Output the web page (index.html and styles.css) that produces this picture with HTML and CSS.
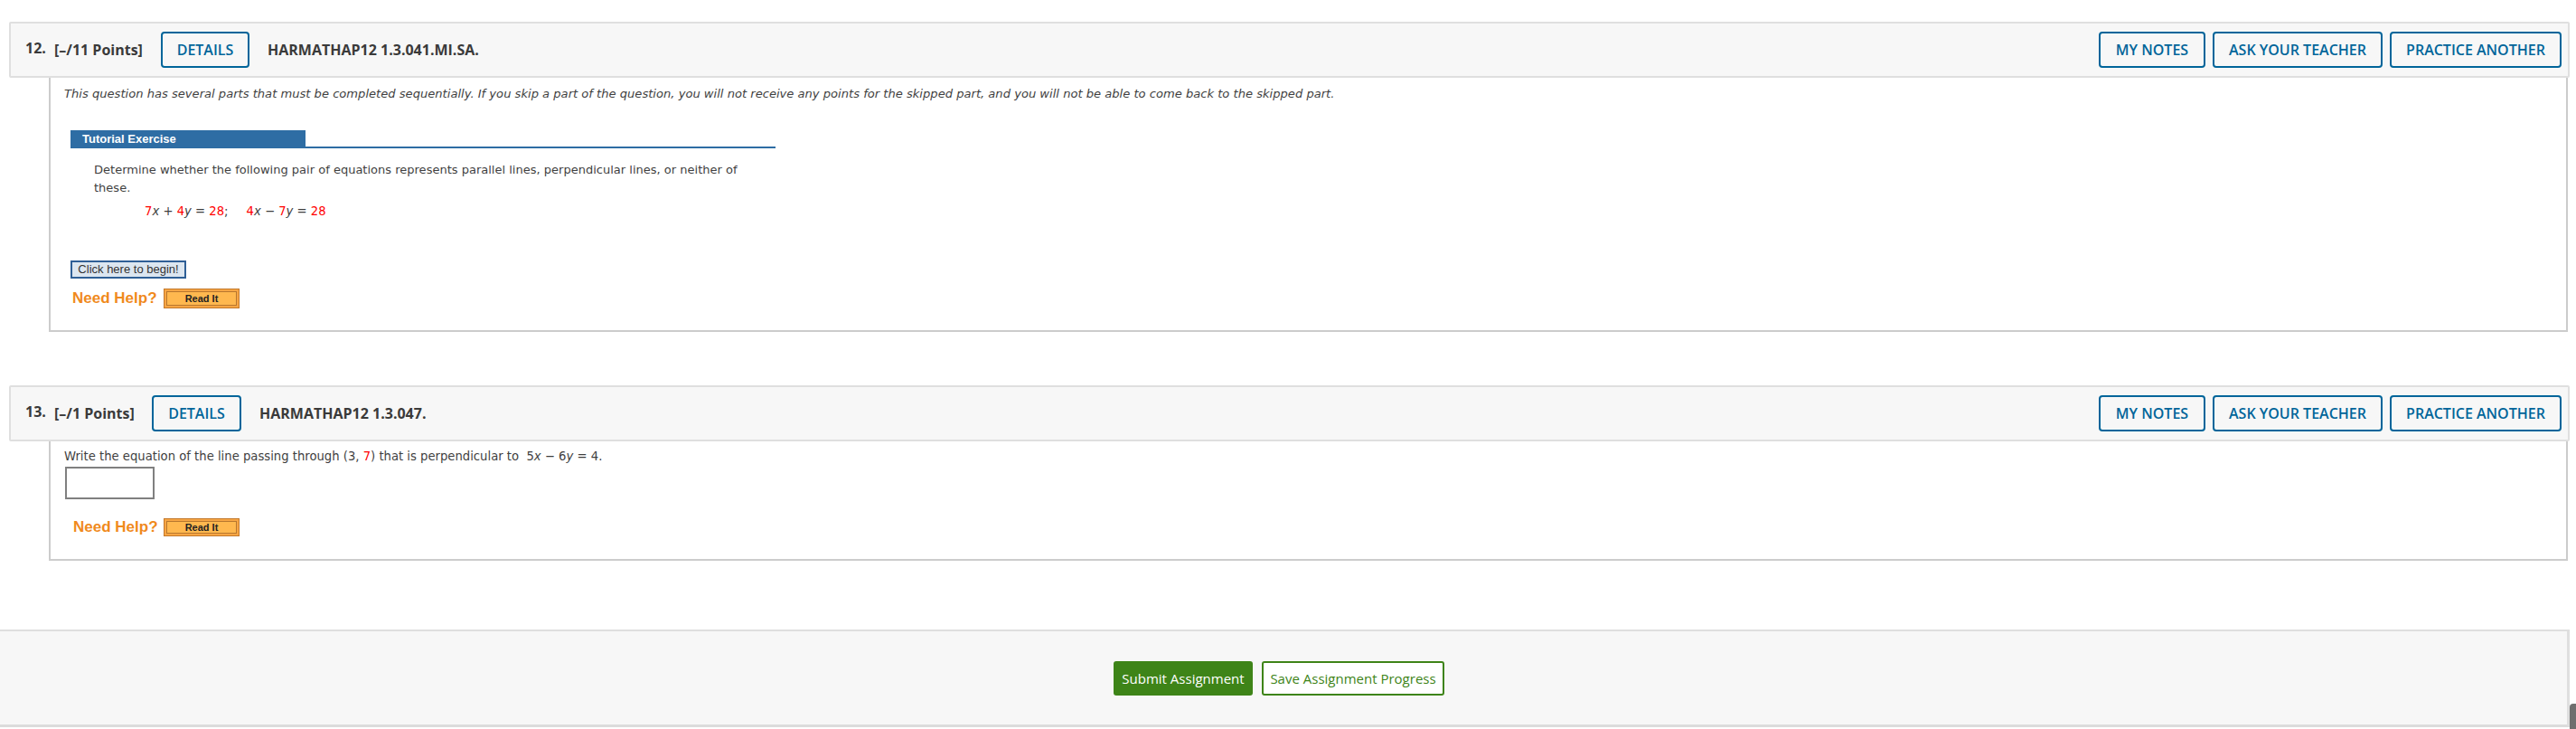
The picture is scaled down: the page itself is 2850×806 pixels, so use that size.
FILE: index.html
```html
<!DOCTYPE html>
<html lang="en">
<head>
<meta charset="utf-8">
<title>Assignment</title>
<link rel="stylesheet" href="styles.css">
</head>
<body>
<main class="page">
  <section class="question q12">
    <header class="qhead">
      <span class="qnum">12.</span>
      <span class="points">[–/11 Points]</span>
      <a class="btn details">DETAILS</a>
      <span class="code">HARMATHAP12 1.3.041.MI.SA.</span>
      <div class="actions">
        <a class="btn notes">MY NOTES</a>
        <a class="btn ask">ASK YOUR TEACHER</a>
        <a class="btn practice">PRACTICE ANOTHER</a>
      </div>
    </header>
    <div class="qbody">
      <p class="note">This question has several parts that must be completed sequentially. If you skip a part of the question, you will not receive any points for the skipped part, and you will not be able to come back to the skipped part.</p>
      <div class="tutorial">
        <div class="tut-head"><span class="tut-title">Tutorial Exercise</span></div>
        <p class="prompt">Determine whether the following pair of equations represents parallel lines, perpendicular lines, or neither of these.</p>
        <p class="equation"><span class="red">7</span><i>x</i> + <span class="red">4</span><i>y</i> = <span class="red">28</span>;<span class="eqgap"></span><span class="red">4</span><i>x</i> − <span class="red">7</span><i>y</i> = <span class="red">28</span></p>
      </div>
      <button class="begin" type="button">Click here to begin!</button>
      <div class="help help-a"><span class="need">Need Help?</span><span class="readit"><span class="readit-in">Read It</span></span></div>
    </div>
  </section>

  <section class="question q13">
    <header class="qhead">
      <span class="qnum">13.</span>
      <span class="points">[–/1 Points]</span>
      <a class="btn details">DETAILS</a>
      <span class="code">HARMATHAP12 1.3.047.</span>
      <div class="actions">
        <a class="btn notes">MY NOTES</a>
        <a class="btn ask">ASK YOUR TEACHER</a>
        <a class="btn practice">PRACTICE ANOTHER</a>
      </div>
    </header>
    <div class="qbody qbody-b">
      <p class="line">Write the equation of the line passing through (3, <span class="red">7</span>) that is perpendicular to&nbsp; 5<i>x</i> − 6<i>y</i> = 4.</p>
      <input class="answer" type="text" aria-label="Answer">
      <div class="help help-b"><span class="need">Need Help?</span><span class="readit"><span class="readit-in">Read It</span></span></div>
    </div>
  </section>

  <footer class="submitbar">
    <button class="submit" type="button">Submit Assignment</button>
    <button class="save" type="button">Save Assignment Progress</button>
  </footer>
  <div class="edgetab"></div>
</main>
</body>
</html>
```

FILE: styles.css
```css
* { box-sizing: border-box; }
html, body { margin: 0; padding: 0; background: #fff; }
body { height: 806px; overflow: hidden; }
.page { position: relative; height: 806px; padding-top: 24px; font-family: "DejaVu Sans", sans-serif; color: #333; }
p { margin: 0; }

.question { margin-left: 10px; margin-right: 7px; }
.q13 { margin-top: 59px; }
.qhead { display: flex; align-items: center; height: 62px; padding: 0 7px 0 16px; background: #f7f7f7; border: 2px solid #dfdfdf; border-radius: 2px; font-family: "Open Sans", sans-serif; }
.qnum { width: 32px; font-size: 16px; font-weight: 700; margin-top: -5px; color: #3a3a3a; }
.points { font-size: 16px; font-weight: 700; color: #3a3a3a; }
.code { font-size: 16px; font-weight: 700; color: #3a3a3a; }
.q12 .points { width: 118px; }
.q13 .points { width: 108px; }
.q12 .code { margin-left: 20px; }
.q13 .code { margin-left: 20px; }
.btn { display: flex; align-items: center; justify-content: center; height: 40px; border: 2.5px solid #00659a; border-radius: 4px; color: #00659a; font-size: 16px; font-weight: 600; }
.q12 .details { width: 98px; }
.q13 .details { width: 99px; }
.actions { display: flex; gap: 8px; margin-left: auto; }
.notes { width: 118px; }
.ask { width: 188px; }
.practice { width: 190px; }

.qbody { margin-left: 44px; margin-right: 2px; padding: 8px 0 24px 15px; border-left: 2.5px solid #ccc; border-right: 2px solid #ccc; border-bottom: 2.5px solid #ccc; font-size: 13px; line-height: 20px; color: #3f3f3f; }
.qbody-b { padding-top: 7px; padding-bottom: 24px; }
.note { font-style: italic; font-size: 13.1px; }
.tutorial { width: 780px; margin: 30px 0 0 7px; }
.tut-head { height: 20px; border-bottom: 2.5px solid #2e6da4; }
.tut-title { display: block; width: 260px; height: 20px; padding-left: 13px; background: #2e6da4; color: #fff; font: 700 13px/19px "Liberation Sans", sans-serif; }
.prompt { width: 740px; margin-top: 14px; padding-left: 26px; font-size: 13.03px; }
.equation { margin-top: 6px; padding-left: 82px; font-size: 13.2px; }
.eqgap { display: inline-block; width: 20px; }
.red { color: #f00; }
.begin { display: block; width: 128px; height: 20px; margin: 44px 0 0 7px; padding: 0; background: #dce6f0; border: 2px solid #2f5f96; color: #333; font: 13px/16px "Liberation Sans", sans-serif; }
.help { display: flex; align-items: center; }
.help-a { margin: 11px 0 0 9px; }
.help-b { margin: 20px 0 0 10px; }
.need { width: 101px; color: #f08a1d; font: 700 17px/22px "Liberation Sans", sans-serif; }
.help-b .need { width: 100px; }
.readit { display: block; width: 84px; height: 22px; padding: 2px; background: #f6a544; border: 1px solid #c4782a; }
.readit-in { display: block; height: 16px; background: #ffb84f; border: 1px solid #b8772f; color: #222; text-align: center; font: 700 11px/14px "Liberation Sans", sans-serif; }
.help-b .readit { height: 20px; }
.help-b .readit-in { height: 14px; line-height: 13px; }
.line { font-size: 13.2px; }
.answer { display: block; width: 99px; height: 36px; margin: 1px 0 0 1px; padding: 0; background: #fff; border: 2.5px solid #808080; }

.submitbar { display: flex; align-items: center; justify-content: center; gap: 10px; position: absolute; left: 0; right: 7px; top: 696px; height: 108px; padding-right: 10px; background: #f7f7f7; border-top: 2px solid #dfdfdf; border-right: 3px solid #dfdfdf; border-bottom: 3px solid #dcdcdc; }
.submit, .save { height: 38px; padding: 0; border-radius: 3px; font: 15px "Open Sans", sans-serif; }
.submit { width: 154px; background: #3e8418; border: 0; color: #fff; }
.save { width: 202px; background: #fff; border: 2px solid #3e8418; color: #3e8418; }
.edgetab { position: absolute; right: 0; top: 778px; width: 7px; height: 28px; background: #6e6e6e; border-radius: 4px 0 0 0; }
```
